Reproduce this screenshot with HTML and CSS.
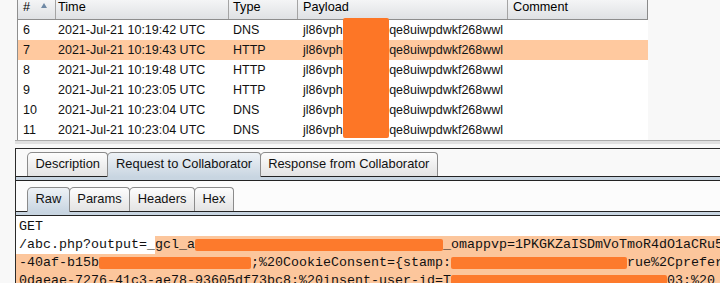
FILE: index.html
```html
<!DOCTYPE html>
<html>
<head>
<meta charset="utf-8">
<link rel="stylesheet" href="styles.css">
</head>
<body>
<div class="top">
  <div class="tbl">
    <div class="thead">
      <div class="th c-num">#<span class="sort"></span></div>
      <div class="th c-time">Time</div>
      <div class="th c-type">Type</div>
      <div class="th c-pay">Payload</div>
      <div class="th c-com last">Comment</div>
    </div>
    <div class="row"><div class="td c-num">6</div><div class="td c-time">2021-Jul-21 10:19:42 UTC</div><div class="td c-type">DNS</div><div class="td c-pay">jl86vph<span class="gap"></span>qe8uiwpdwkf268wwl</div><div class="td c-com"></div></div>
    <div class="row sel"><div class="td c-num">7</div><div class="td c-time">2021-Jul-21 10:19:43 UTC</div><div class="td c-type">HTTP</div><div class="td c-pay">jl86vph<span class="gap"></span>qe8uiwpdwkf268wwl</div><div class="td c-com"></div></div>
    <div class="row"><div class="td c-num">8</div><div class="td c-time">2021-Jul-21 10:19:48 UTC</div><div class="td c-type">HTTP</div><div class="td c-pay">jl86vph<span class="gap"></span>qe8uiwpdwkf268wwl</div><div class="td c-com"></div></div>
    <div class="row"><div class="td c-num">9</div><div class="td c-time">2021-Jul-21 10:23:05 UTC</div><div class="td c-type">HTTP</div><div class="td c-pay">jl86vph<span class="gap"></span>qe8uiwpdwkf268wwl</div><div class="td c-com"></div></div>
    <div class="row"><div class="td c-num">10</div><div class="td c-time">2021-Jul-21 10:23:04 UTC</div><div class="td c-type">DNS</div><div class="td c-pay">jl86vph<span class="gap"></span>qe8uiwpdwkf268wwl</div><div class="td c-com"></div></div>
    <div class="row"><div class="td c-num">11</div><div class="td c-time">2021-Jul-21 10:23:04 UTC</div><div class="td c-type">DNS</div><div class="td c-pay">jl86vph<span class="gap"></span>qe8uiwpdwkf268wwl</div><div class="td c-com"></div></div>
  </div>
  <div class="redact-tbl"></div>
</div>
<div class="split"></div>
<div class="panel">
  <div class="tabs">
    <div class="tab">Description</div>
    <div class="tab active">Request to Collaborator</div>
    <div class="tab">Response from Collaborator</div>
  </div>
  <div class="strip"></div>
  <div class="sub">
    <div class="tabs">
      <div class="tab active">Raw</div>
      <div class="tab">Params</div>
      <div class="tab">Headers</div>
      <div class="tab">Hex</div>
    </div>
    <div class="strip"></div>
  </div>
  <div class="editor">
    <div class="ln">GET</div>
    <div class="ln">/abc.php?output=_<span class="hl">gcl_a<span class="bar b31"></span>_omappvp=1PKGKZaISDmVoTmoR4dO1aCRu5</span></div>
    <div class="ln hline">-40af-b15b<span class="bar b19"></span>;%20CookieConsent={stamp:<span class="bar b22"></span>rue%2Cprefer</div>
    <div class="ln hline">0daeae-7276-41c3-ae78-93605df73bc8;%20insent-user-id=T<span class="bar b27"></span>03:%20</div>
  </div>
</div>
</body>
</html>
```

FILE: styles.css
```css
html, body {
  margin: 0;
  padding: 0;
  background: #f8f8f8;
  overflow: hidden;
  height: 283px;
}
body {
  font-family: "Liberation Sans", Arial, sans-serif;
  color: #000;
}
.top {
  position: relative;
  padding-left: 17px;
  height: 140px;
}
.tbl {
  width: 630px;
  border-left: 1px solid #8f8f8f;
  background: #fff;
  height: 140px;
}
.thead, .row {
  display: grid;
  grid-template-columns: 38px 173px 69px 210px 140px;
}
.thead {
  height: 19px;
  border-bottom: 1px solid #8d8d8d;
  background: linear-gradient(#f4f5f6, #dfe1e4);
}
.th {
  font-size: 12.7px;
  line-height: 15px;
  border-right: 1px solid #a4a4a4;
  white-space: nowrap;
  overflow: hidden;
}
.th.last { border-right-color: #8a8a8a; }
.c-num { padding-left: 5px; }
.c-time { padding-left: 2px; }
.c-type { padding-left: 4px; }
.c-pay { padding-left: 5px; }
.c-com { padding-left: 5px; }
.sort {
  display: inline-block;
  width: 0;
  height: 0;
  margin-left: 11px;
  border-left: 3.5px solid transparent;
  border-right: 3.5px solid transparent;
  border-bottom: 5px solid #6f89a5;
  vertical-align: 3px;
}
.row {
  height: 20px;
}
.row.sel { background: #ffc99f; }
.td {
  font-size: 12.5px;
  line-height: 19px;
  padding-top: 1px;
  white-space: nowrap;
  overflow: hidden;
  color: #111;
}
.gap {
  display: inline-block;
  width: 46.5px;
}
.redact-tbl {
  position: absolute;
  left: 343px;
  top: 18px;
  width: 46px;
  height: 120px;
  background: #fd7626;
  border-radius: 2px;
}
.split {
  margin-left: 15px;
  height: 3px;
  border-top: 1px solid #ababab;
  background: #e0e0e0;
}
.panel {
  margin-top: 4px;
  margin-left: 15px;
  border-top: 1px solid #2b2b2b;
  border-left: 1px solid #2b2b2b;
  background: #f9f9f9;
}
.tabs {
  display: flex;
  align-items: flex-end;
  padding: 3px 0 0 11px;
  border-bottom: 1px solid #232323;
}
.tab {
  box-sizing: border-box;
  height: 24px;
  padding: 0 7.5px;
  margin-right: -1px;
  border: 1px solid #8b8b8b;
  border-bottom: none;
  border-radius: 5px 4px 0 0;
  background: linear-gradient(#fdfdfd, #e3e3e3);
  font-size: 12.9px;
  line-height: 22px;
  color: #111;
  white-space: nowrap;
}
.tab.active {
  position: relative;
  z-index: 1;
  height: 25px;
  margin-bottom: -1px;
  background: linear-gradient(#eef2f6, #c8d5e1);
}
.strip {
  height: 3px;
  background: #c8d5e1;
  border-bottom: 1px solid #232323;
}
.sub {
  padding-top: 3px;
  background: #fcfcfc;
}
.editor {
  background: #fff;
  padding-top: 2px;
  height: 70px;
  overflow: hidden;
  font-family: "Liberation Mono", "Courier New", monospace;
  font-size: 13.33px;
  line-height: 18px;
  color: #111;
}
.ln {
  height: 18px;
  padding-left: 3px;
  white-space: pre;
  overflow: hidden;
}
.hline { background: #fcc69c; }
.hl {
  display: inline-block;
  height: 18px;
  vertical-align: top;
  background: #fcc69c;
  padding-right: 40px;
}
.bar {
  display: inline-block;
  height: 12px;
  vertical-align: -3px;
  background: #fd7a2c;
  border-radius: 2px;
}
.b19 { width: 152px; }
.b22 { width: 176px; }
.b27 { width: 216px; }
.b31 { width: 248px; }
```
